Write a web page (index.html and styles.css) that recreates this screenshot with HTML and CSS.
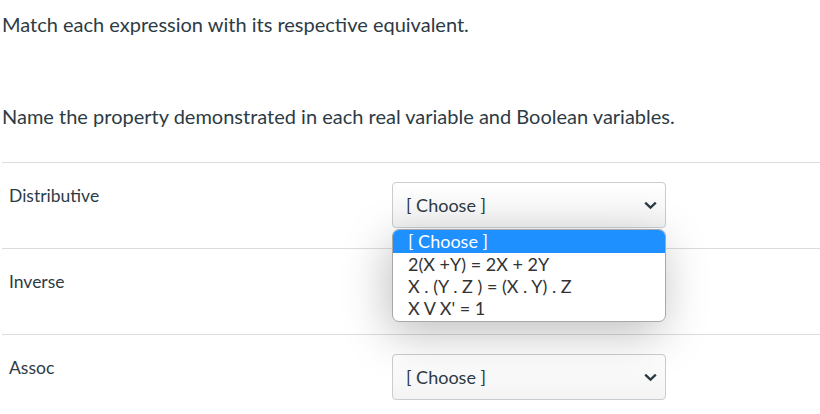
FILE: index.html
```html
<!DOCTYPE html>
<html lang="en">
<head>
    <meta charset="UTF-8">
    <meta name="viewport" content="width=device-width, initial-scale=1.0">
    <title>Matching question</title>
    <link rel="stylesheet" href="styles.css">
</head>
<body>
    <div class="question">
        <p class="intro">Match each expression with its respective equivalent.</p>
        <p class="intro second">Name the property demonstrated in each real variable and Boolean variables.</p>

        <div class="answers">
            <div class="match-row">
                <div class="match-label">Distributive</div>
                <div class="select-wrap">
                    <div class="select">
                        <span>[ Choose ]</span>
                        <svg class="chevron" width="13" height="9" viewBox="0 0 13 9"><path d="M1.2 1.6 L6.5 6.6 L11.8 1.6" fill="none" stroke="#2d3b45" stroke-width="2.3"/></svg>
                    </div>
                    <ul class="dropdown">
                        <li class="active">[ Choose ]</li>
                        <li>2(X +Y) = 2X + 2Y</li>
                        <li>X . (Y . Z ) = (X . Y) . Z</li>
                        <li>X V X' = 1</li>
                    </ul>
                </div>
            </div>
            <div class="match-row">
                <div class="match-label">Inverse</div>
                <div class="select-wrap">
                    <div class="select">
                        <span>[ Choose ]</span>
                        <svg class="chevron" width="13" height="9" viewBox="0 0 13 9"><path d="M1.2 1.6 L6.5 6.6 L11.8 1.6" fill="none" stroke="#2d3b45" stroke-width="2.3"/></svg>
                    </div>
                </div>
            </div>
            <div class="match-row">
                <div class="match-label">Assoc</div>
                <div class="select-wrap">
                    <div class="select">
                        <span>[ Choose ]</span>
                        <svg class="chevron" width="13" height="9" viewBox="0 0 13 9"><path d="M1.2 1.6 L6.5 6.6 L11.8 1.6" fill="none" stroke="#2d3b45" stroke-width="2.3"/></svg>
                    </div>
                </div>
            </div>
        </div>
    </div>
</body>
</html>
```

FILE: styles.css
```css
body {
    font-family: Lato, "Open Sans", sans-serif;
    margin: 0;
    padding: 0;
    background-color: #fff;
    color: #2d3b45;
}
.question {
    padding: 0 0 0 2px;
}
.intro {
    margin: 0;
    font-size: 20px;
    line-height: 27px;
    padding-top: 11px;
}
.intro.second {
    padding-top: 65px;
}
.answers {
    margin-top: 32px;
}
.match-row {
    display: grid;
    grid-template-columns: 390px 274px;
    padding: 19px 0 20px 0;
    border-top: 1px solid #dcdcdc;
}
.match-label {
    padding: 2px 0 0 7px;
    font-size: 17.5px;
    line-height: 24px;
}
.select-wrap {
    position: relative;
}
.select {
    box-sizing: border-box;
    height: 46px;
    display: flex;
    align-items: center;
    justify-content: space-between;
    padding: 0 8px 0 13px;
    border: 1px solid #c7cdd1;
    border-radius: 4px;
    background: linear-gradient(#fff, #f3f3f3);
    font-size: 18px;
}
.dropdown {
    position: absolute;
    top: 47px;
    left: 0;
    width: 274px;
    box-sizing: border-box;
    margin: 0;
    padding: 0 0 2px 0;
    list-style: none;
    background: #fff;
    border: 1px solid #a8a8a8;
    border-radius: 7px;
    overflow: hidden;
    box-shadow: -4px 12px 45px rgba(0, 0, 0, 0.25);
    font-size: 18px;
    z-index: 2;
}
.dropdown li {
    height: 22px;
    line-height: 22px;
    padding-left: 15px;
    color: #333;
}
.dropdown li.active {
    height: 23px;
    background-color: #1e90ff;
    color: #fff;
}
```
